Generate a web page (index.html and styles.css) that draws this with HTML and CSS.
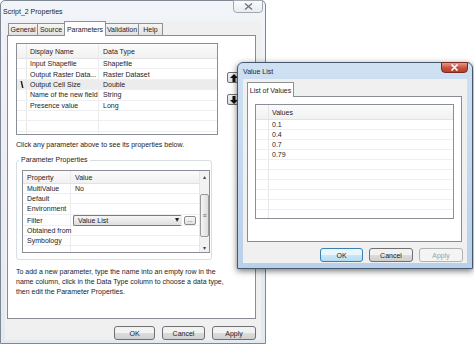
FILE: index.html
```html
<!DOCTYPE html>
<html lang="en">
<head>
    <meta charset="UTF-8">
    <title>Script_2 Properties</title>
    <link rel="stylesheet" href="styles.css">
</head>
<body>
<div class="desktop">

    <!-- main properties dialog -->
    <div class="window main-win">
        <div class="titlebar">
            <span class="title">Script_2 Properties</span>
            <span class="close-btn inactive">
                <svg width="9" height="7" viewBox="0 0 9 7"><path d="M1 0.5 L8 6.5 M8 0.5 L1 6.5" stroke="#6d737b" stroke-width="1.3"/></svg>
            </span>
        </div>
        <div class="client">
            <div class="tabs">
                <span class="tab" style="width:30px">General</span>
                <span class="tab" style="width:28px">Source</span>
                <span class="tab active" style="width:42px">Parameters</span>
                <span class="tab" style="width:34px">Validation</span>
                <span class="tab" style="width:25px">Help</span>
            </div>
            <div class="tab-page main-page">
                <div class="param-area">
                    <div class="grid param-grid">
                        <div class="row head"><span class="rh"></span><span class="c1">Display Name</span><span class="c2">Data Type</span></div>
                        <div class="row"><span class="rh"></span><span class="c1">Input Shapefile</span><span class="c2">Shapefile</span></div>
                        <div class="row"><span class="rh"></span><span class="c1">Output Raster Data...</span><span class="c2">Raster Dataset</span></div>
                        <div class="row current"><span class="rh"><svg width="4" height="7" viewBox="0 0 4 7"><path d="M0.5 0 H2 L3.5 7 H2 Z" fill="#222"/></svg></span><span class="c1">Output Cell Size</span><span class="c2">Double</span></div>
                        <div class="row"><span class="rh"></span><span class="c1">Name of the new field</span><span class="c2">String</span></div>
                        <div class="row"><span class="rh"></span><span class="c1">Presence value</span><span class="c2">Long</span></div>
                        <div class="row"><span class="rh"></span><span class="c1"></span><span class="c2"></span></div>
                        <div class="row"><span class="rh"></span><span class="c1"></span><span class="c2"></span></div>
                        <div class="row"><span class="rh"></span><span class="c1"></span><span class="c2"></span></div>
                    </div>
                    <div class="move-btns">
                        <span class="move-btn"><svg width="8" height="8" viewBox="0 0 8 8"><path d="M4 0 L8 4 H5.5 V8 H2.5 V4 H0 Z" fill="#111"/></svg></span>
                        <span class="move-btn"><svg width="8" height="8" viewBox="0 0 8 8"><path d="M4 8 L8 4 H5.5 V0 H2.5 V4 H0 Z" fill="#111"/></svg></span>
                    </div>
                </div>

                <p class="hint">Click any parameter above to see its properties below.</p>

                <fieldset class="group">
                    <legend>Parameter Properties</legend>
                    <div class="prop-grid">
                        <div class="prop-rows">
                            <div class="prow head"><span>Property</span><span>Value</span></div>
                            <div class="prow"><span>MultiValue</span><span>No</span></div>
                            <div class="prow"><span>Default</span><span></span></div>
                            <div class="prow"><span>Environment</span><span></span></div>
                            <div class="prow filter"><span>Filter</span>
                                <span class="filter-cell">
                                    <span class="combo">Value List<i class="combo-arrow">▾</i></span>
                                    <span class="dots">...</span>
                                </span>
                            </div>
                            <div class="prow"><span>Obtained from</span><span></span></div>
                            <div class="prow"><span>Symbology</span><span></span></div>
                            <div class="prow"><span></span><span></span></div>
                        </div>
                        <div class="scrollbar">
                            <span class="sb-arrow">▴</span>
                            <span class="sb-track"><span class="sb-thumb">≡</span></span>
                            <span class="sb-arrow">▾</span>
                        </div>
                    </div>
                </fieldset>

                <p class="help">To add a new parameter, type the name into an empty row in the<br>name column, click in the Data Type column to choose a data type,<br>then edit the Parameter Properties.</p>
            </div>
            <div class="buttons">
                <button class="btn" style="width:41px">OK</button>
                <button class="btn" style="width:43px">Cancel</button>
                <button class="btn" style="width:44px">Apply</button>
            </div>
        </div>
    </div>

    <!-- value list dialog on top -->
    <div class="window vl-win">
        <div class="titlebar">
            <span class="title">Value List</span>
            <span class="close-btn red">
                <svg width="9" height="7" viewBox="0 0 9 7"><path d="M1.5 0.5 L7.5 6.5 M7.5 0.5 L1.5 6.5" stroke="#fff" stroke-width="1.6"/></svg>
            </span>
        </div>
        <div class="client">
            <div class="tabs">
                <span class="tab active" style="width:47px">List of Values</span>
            </div>
            <div class="tab-page vl-page">
                <div class="grid vl-grid">
                    <div class="row head"><span class="rh"></span><span class="c1">Values</span></div>
                    <div class="row"><span class="rh"></span><span class="c1">0.1</span></div>
                    <div class="row"><span class="rh"></span><span class="c1">0.4</span></div>
                    <div class="row"><span class="rh"></span><span class="c1">0.7</span></div>
                    <div class="row"><span class="rh"></span><span class="c1">0.79</span></div>
                    <div class="row"><span class="rh"></span><span class="c1"></span></div>
                    <div class="row"><span class="rh"></span><span class="c1"></span></div>
                    <div class="row"><span class="rh"></span><span class="c1"></span></div>
                    <div class="row"><span class="rh"></span><span class="c1"></span></div>
                    <div class="row"><span class="rh"></span><span class="c1"></span></div>
                    <div class="row"><span class="rh"></span><span class="c1"></span></div>
                </div>
            </div>
            <div class="buttons">
                <button class="btn default" style="width:43px">OK</button>
                <button class="btn" style="width:44px">Cancel</button>
                <button class="btn disabled" style="width:44px">Apply</button>
            </div>
        </div>
    </div>

</div>
</body>
</html>
```

FILE: styles.css
```css
* {
    box-sizing: border-box;
}
body {
    margin: 0;
    background-color: #fff;
    font-family: "Liberation Sans", Arial, sans-serif;
    font-size: 7px;
    color: #1c1c1c;
}
.desktop {
    position: relative;
    width: 474px;
    height: 350px;
    overflow: hidden;
}

/* window frames */
.window {
    display: flex;
    flex-direction: column;
    border: 1px solid #7f8792;
    border-radius: 5px 5px 0 0;
}
.main-win {
    width: 266px;
    height: 344px;
    padding: 0 4px 4px 4px;
    background: linear-gradient(#f1f4f8, #e3e9f0);
}
.vl-win {
    position: absolute;
    left: 237px;
    top: 62px;
    width: 236px;
    height: 207px;
    padding: 0 5px 5px 5px;
    border-color: #46586e;
    border-radius: 6px 6px 0 0;
    background: linear-gradient(#cfe0f3, #b9d0ea);
    box-shadow: 0 2px 6px rgba(0, 0, 0, 0.55);
}
.titlebar {
    position: relative;
    display: flex;
    align-items: center;
    flex-shrink: 0;
}
.main-win .titlebar {
    height: 20px;
}
.vl-win .titlebar {
    height: 16px;
}
.main-win .title {
    margin-left: -2px;
}
.title {
    color: #1e1e1e;
}
.close-btn {
    position: absolute;
    top: -1px;
    display: flex;
    align-items: center;
    justify-content: center;
    border-radius: 0 0 4px 4px;
}
.close-btn.inactive {
    right: -2px;
    width: 30px;
    height: 13px;
    border: 1px solid #a2a8b0;
    background: linear-gradient(#fbfcfd, #e8ecf0);
}
.close-btn.red {
    right: -1px;
    width: 27px;
    height: 11px;
    border: 1px solid #7a2a20;
    background: linear-gradient(#e4998c, #c8503c 55%, #b5402c);
}

.client {
    flex: 1;
    display: flex;
    flex-direction: column;
    background-color: #f0f0f0;
}
.main-win .client {
    padding: 0 5px 0 2px;
}
.vl-win .client {
    padding: 3px 4px 0 4px;
}

/* tabs */
.tabs {
    display: flex;
    align-items: flex-end;
    height: 14px;
    padding-left: 1px;
    position: relative;
    z-index: 1;
}
.vl-win .tabs {
    padding-left: 0;
}
.tab {
    display: flex;
    align-items: center;
    justify-content: center;
    height: 12px;
    margin-right: -1px;
    border: 1px solid #8e9297;
    border-bottom: none;
    background: linear-gradient(#f5f5f5, #e2e2e2);
    white-space: nowrap;
}
.tab.active {
    height: 15px;
    margin-bottom: -1px;
    background: #fff;
    position: relative;
    z-index: 2;
}
.tab-page {
    border: 1px solid #898c95;
    background-color: #fff;
}
.main-page {
    width: 249px;
    height: 284px;
    padding: 7px 0 0 8px;
}
.vl-page {
    width: 215px;
    height: 146px;
    padding: 7px 0 0 7px;
}

/* data grids */
.grid {
    border: 1px solid #8a8f97;
    overflow: hidden;
}
.grid .row {
    display: grid;
    height: 10.4px;
    align-items: center;
    border-bottom: 1px solid #efefef;
}
.grid .row span {
    height: 100%;
    display: flex;
    align-items: center;
    white-space: nowrap;
    overflow: hidden;
}
.grid .row.head {
    height: 15px;
    background: linear-gradient(#fbfbfb, #f1f1f1);
    border-bottom: 1px solid #e2e2e2;
}
.grid .rh {
    border-right: 1px solid #e6e6e6;
    justify-content: center;
}
.grid .c1 {
    border-right: 1px solid #ececec;
}
.param-area {
    display: flex;
    align-items: flex-start;
}
.param-grid {
    width: 202px;
    height: 92px;
}
.param-grid .row {
    grid-template-columns: 10px 72px 1fr;
}
.param-grid .c1 {
    padding-left: 3px;
}
.param-grid .c2 {
    padding-left: 4px;
}
.param-grid .row.current {
    background-color: #ececec;
}
.move-btns {
    display: flex;
    flex-direction: column;
    gap: 11px;
    margin: 29px 0 0 9px;
}
.move-btn {
    display: flex;
    align-items: center;
    justify-content: center;
    width: 14px;
    height: 11px;
    border: 1px solid #707070;
    border-radius: 2px;
    background: linear-gradient(#f3f3f3, #dcdcdc);
}

.hint {
    margin: 5px 0 0 0;
    line-height: 10px;
}

/* parameter properties group */
.group {
    width: 196px;
    margin: 5px 0 0 0;
    padding: 5px 1px 6px 5px;
    border: 1px solid #d5dfe5;
    border-radius: 3px;
}
.group legend {
    margin-left: -3px;
    padding: 0 2px;
    line-height: 10px;
}
.prop-grid {
    display: flex;
    width: 188px;
    height: 83px;
    border: 1px solid #8a8f97;
    overflow: hidden;
}
.prop-rows {
    flex: 1;
}
.prow {
    display: grid;
    grid-template-columns: 48px 1fr;
    height: 10.2px;
    border-bottom: 1px solid #efefef;
}
.prow span {
    display: flex;
    align-items: center;
    padding-left: 4px;
    white-space: nowrap;
}
.prow span:first-child {
    border-right: 1px solid #ececec;
}
.prow.head {
    height: 13px;
    background: linear-gradient(#fbfbfb, #f1f1f1);
    border-bottom: 1px solid #e2e2e2;
}
.prow.filter {
    height: 11px;
}
.prow .filter-cell {
    padding-left: 2px;
    gap: 2px;
}
.combo {
    position: relative;
    display: flex;
    align-items: center;
    width: 109px;
    height: 11px;
    padding-left: 3px;
    border: 1px solid #7a7a7a;
    border-radius: 2px;
    background: linear-gradient(#f6f6f6, #dedede);
}
.combo-arrow {
    position: absolute;
    right: 2px;
    top: -1px;
    font-style: normal;
    font-size: 8px;
}
.dots {
    display: flex;
    align-items: flex-start;
    justify-content: center;
    width: 12px;
    height: 9px;
    padding: 0 !important;
    border: 1px solid #8a8a8a;
    border-radius: 2px;
    background: linear-gradient(#f8f8f8, #e0e0e0);
    font-size: 6px;
    line-height: 5px;
}
.scrollbar {
    display: flex;
    flex-direction: column;
    width: 10px;
    background-color: #f2f2f2;
    border-left: 1px solid #e6e6e6;
}
.sb-arrow {
    display: flex;
    align-items: center;
    justify-content: center;
    height: 10px;
    font-size: 6px;
    color: #444;
}
.sb-track {
    flex: 1;
    padding-top: 13px;
}
.sb-thumb {
    display: flex;
    align-items: center;
    justify-content: center;
    height: 43px;
    border: 1px solid #9a9a9a;
    border-radius: 2px;
    background: linear-gradient(90deg, #f5f5f5, #dedede);
    font-size: 7px;
    color: #666;
}

.help {
    margin: 7px 0 0 0;
    line-height: 10px;
}

/* value list grid */
.vl-grid {
    width: 199px;
    height: 115px;
}
.vl-grid .row {
    grid-template-columns: 13px 1fr;
    height: 10px;
}
.vl-grid .c1 {
    padding-left: 3px;
    border-right: none;
}

/* dialog buttons */
.buttons {
    display: flex;
    justify-content: flex-end;
}
.main-win .buttons {
    gap: 8px 7px;
    margin-top: 7px;
}
.vl-win .buttons {
    gap: 6px;
    margin-top: 6px;
}
.btn {
    height: 14px;
    padding: 0;
    border: 1px solid #707070;
    border-radius: 3px;
    background: linear-gradient(#f2f2f2 50%, #dcdcdc 50%, #d0d0d0);
    font-family: inherit;
    font-size: 7px;
    color: #1c1c1c;
}
.btn.default {
    border-color: #3c7fb1;
    background: linear-gradient(#eaf6fd 50%, #c8e8f9 50%, #b5dcf3);
}
.btn.disabled {
    border-color: #adb2b5;
    background: #f4f4f4;
    color: #a0a0a0;
}
```
